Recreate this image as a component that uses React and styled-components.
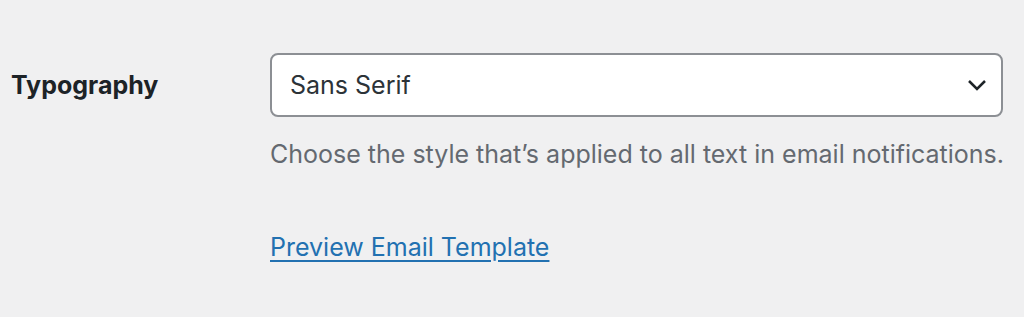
import React from 'react';
import styled, { createGlobalStyle } from 'styled-components';

const GlobalStyle = createGlobalStyle`
    body {
        margin: 0;
        background: #f0f0f1;
        font-family: Inter, "Liberation Sans", Arial, sans-serif;
        color: #1d2327;
    }
`;

const Page = styled.div`
    padding: 53px 0 0 11px;
`;

const Row = styled.div`
    display: flex;
    align-items: flex-start;
`;

const Label = styled.div`
    width: 259px;
    height: 64px;
    display: flex;
    align-items: center;
    font-size: 25px;
    font-weight: 700;
    color: #1d2327;
`;

const Field = styled.div`
    display: flex;
    flex-direction: column;
`;

const SelectBox = styled.div`
    box-sizing: border-box;
    width: 733px;
    height: 64px;
    display: flex;
    align-items: center;
    justify-content: space-between;
    padding: 0 14px 0 18px;
    background: #fff;
    border: 2px solid #8c8f94;
    border-radius: 8px;
    font-size: 25px;
    color: #2c3338;
`;

const Help = styled.p`
    margin: 22px 0 0;
    font-size: 25px;
    line-height: 30px;
    color: #646970;
`;

const Link = styled.a`
    margin-top: 63px;
    font-size: 25px;
    line-height: 30px;
    color: #2271b1;
    text-decoration: underline;
    text-underline-offset: 4px;
`;

const Chevron = () => (
    <svg width="20" height="12" viewBox="0 0 20 12" fill="none">
        <path d="M2 2l8 8 8-8" stroke="#1d2327" strokeWidth="2.5" />
    </svg>
);

export default () => (
    <>
        <GlobalStyle />
        <Page>
            <Row>
                <Label>Typography</Label>
                <Field>
                    <SelectBox>
                        <span>Sans Serif</span>
                        <Chevron />
                    </SelectBox>
                    <Help>Choose the style that’s applied to all text in email notifications.</Help>
                    <Link href="#">Preview Email Template</Link>
                </Field>
            </Row>
        </Page>
    </>
);
